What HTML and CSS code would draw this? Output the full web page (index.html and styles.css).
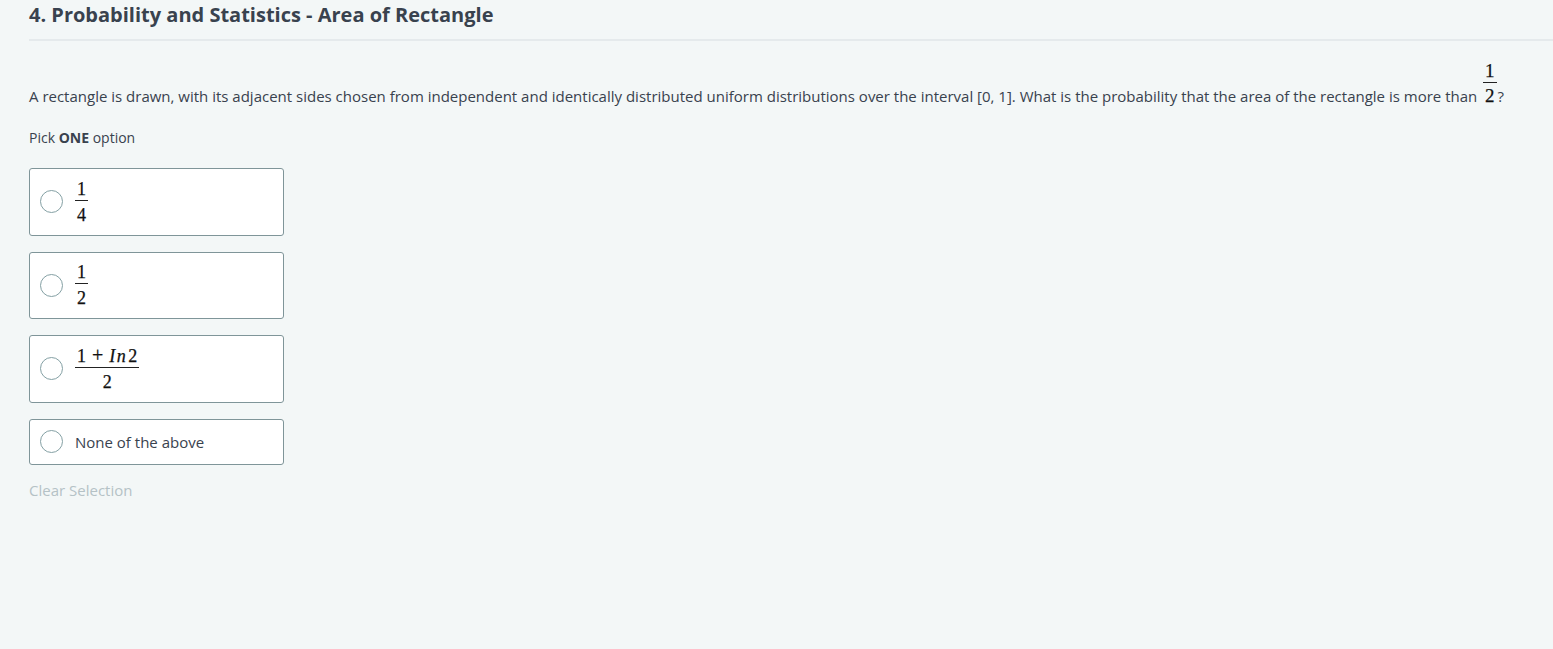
FILE: index.html
```html
<!DOCTYPE html>
<html>
<head>
<meta charset="utf-8">
<link rel="stylesheet" href="styles.css">
</head>
<body>
<div class="page">
  <h1 class="title">4. Probability and Statistics - Area of Rectangle</h1>
  <div class="question">
    <p class="qtext">A rectangle is drawn, with its adjacent sides chosen from independent and identically distributed uniform distributions over the interval [0, 1]. What is the probability that the area of the rectangle is more than <span class="frac qfrac"><span class="num">1</span><span class="den">2</span></span>?</p>
    <p class="pick">Pick <b>ONE</b> option</p>
    <div class="options">
      <label class="option tall"><span class="radio"></span><span class="frac"><span class="num">1</span><span class="den">4</span></span></label>
      <label class="option tall"><span class="radio"></span><span class="frac"><span class="num">1</span><span class="den">2</span></span></label>
      <label class="option tall"><span class="radio"></span><span class="frac wide"><span class="num">1<span class="op">+</span><i>In</i>2</span><span class="den">2</span></span></label>
      <label class="option"><span class="radio"></span><span class="otext">None of the above</span></label>
    </div>
    <div class="clear">Clear Selection</div>
  </div>
</div>
</body>
</html>
```
FILE: styles.css
```css
html, body {
  margin: 0;
  padding: 0;
  background: #f3f7f7;
  height: 100%;
}
body {
  font-family: "Open Sans", "Liberation Sans", sans-serif;
  color: #39424e;
}
.page {
  padding-left: 29px;
}
.title {
  margin: 0;
  font-size: 20px;
  font-weight: 700;
  line-height: 30px;
  color: #39424e;
  padding-bottom: 9px;
  border-bottom: 2px solid #e5eaec;
}
.question {
  padding-top: 20px;
}
.qtext {
  margin: 0;
  font-size: 15px;
  line-height: 20px;
  color: #39424e;
}
.frac {
  display: inline-flex;
  flex-direction: column;
  align-items: center;
  font-family: "Liberation Serif", "DejaVu Serif", serif;
  font-size: 18px;
  line-height: 18px;
  color: #111;
  -webkit-text-stroke: 0.25px #111;
}
.frac .num {
  padding: 0 2px 2px;
  border-bottom: 1px solid #222;
}
.frac .den {
  padding-top: 5px;
}
.qfrac {
  font-size: 19px;
  line-height: 19px;
  vertical-align: 25px;
  margin: 0 1px 0 2px;
}
.qfrac .num {
  padding: 0 2px 2px;
}
.qfrac .den {
  padding-top: 3px;
}
.frac.wide .num {
  padding: 0 2px 2px;
}
.frac .op {
  margin: 0 6px;
  font-size: 20px;
}
.frac i {
  font-style: italic;
  letter-spacing: 1.5px;
  margin-right: 1px;
}
.pick {
  margin: 22px 0 0;
  font-size: 14px;
  line-height: 20px;
  color: #39424e;
}
.pick b {
  font-weight: 700;
}
.options {
  display: flex;
  flex-direction: column;
  gap: 16px;
  margin-top: 20px;
  width: 255px;
}
.option {
  display: flex;
  align-items: center;
  gap: 12px;
  box-sizing: border-box;
  height: 46.5px;
  padding: 0 10px;
  background: #fff;
  border: 1px solid #7f9599;
  border-radius: 3px;
}
.option.tall {
  height: 67.5px;
}
.radio {
  flex: none;
  width: 23px;
  height: 23px;
  box-sizing: border-box;
  border: 1px solid #84a0a4;
  border-radius: 50%;
  background: #fff;
}
.otext {
  font-size: 15px;
  color: #39424e;
}
.clear {
  margin-top: 15px;
  font-size: 15px;
  line-height: 20px;
  color: #b5c2c6;
}
```
